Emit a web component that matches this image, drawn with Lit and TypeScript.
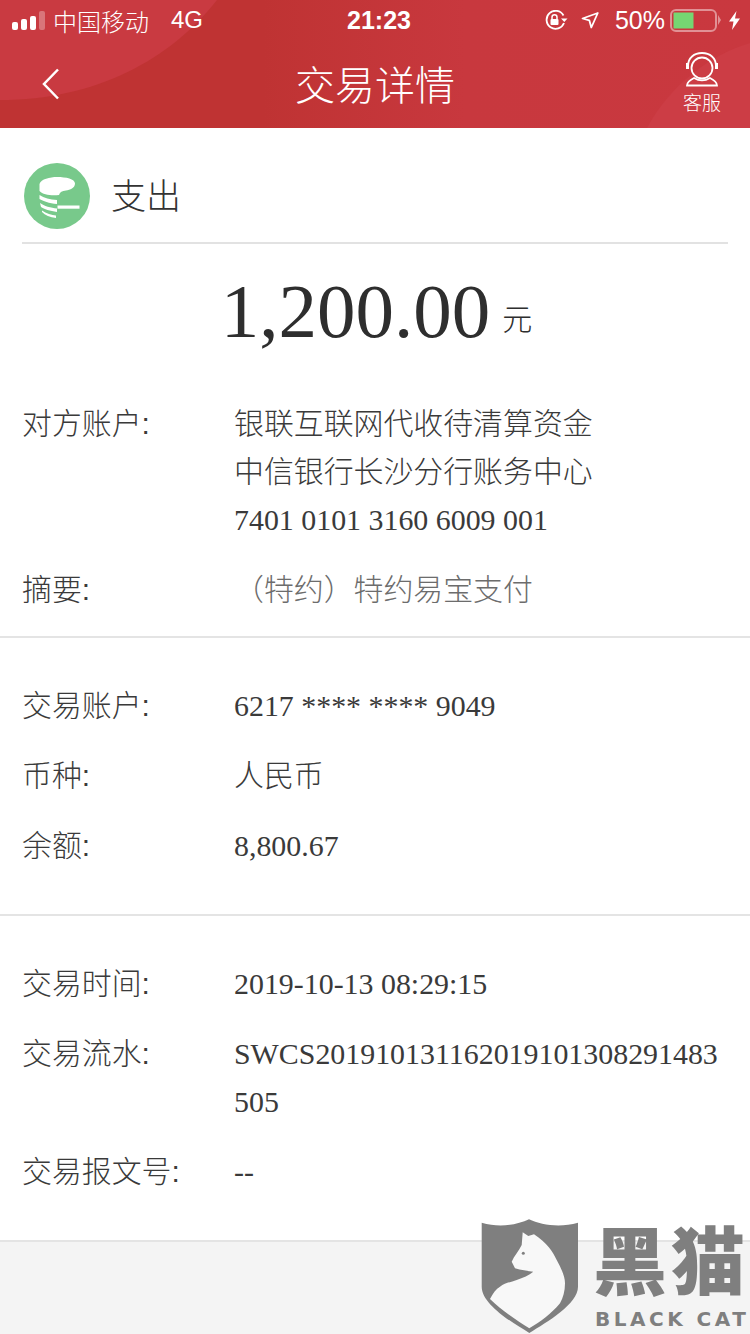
import { LitElement, html, css, svg, unsafeCSS } from 'lit';
import { customElement } from 'lit/decorators.js';

const CJK = unsafeCSS(`"Noto Sans CJK SC", "Liberation Sans", sans-serif`);

interface Row {
  label: string;
  lines: string[];
  muted?: boolean;
}

const first: Row[] = [
  { label: '对方账户:', lines: ['银联互联网代收待清算资金', '中信银行长沙分行账务中心', '7401 0101 3160 6009 001'] },
  { label: '摘要:', lines: ['（特约）特约易宝支付'], muted: true },
];
const second: Row[] = [
  { label: '交易账户:', lines: ['6217 **** **** 9049'] },
  { label: '币种:', lines: ['人民币'] },
  { label: '余额:', lines: ['8,800.67'] },
];
const third: Row[] = [
  { label: '交易时间:', lines: ['2019-10-13 08:29:15'] },
  { label: '交易流水:', lines: ['SWCS201910131162019101308291483', '505'] },
  { label: '交易报文号:', lines: ['--'] },
];

const headerBg = svg`
  <svg class="bg" viewBox="0 0 750 128" preserveAspectRatio="none">
    <defs>
      <linearGradient id="shade" x1="0" y1="0" x2="1" y2="0">
        <stop offset="0" stop-color="#bf3333"></stop>
        <stop offset="0.35" stop-color="#bf3333"></stop>
        <stop offset="0.62" stop-color="#c8383e"></stop>
        <stop offset="1" stop-color="#c9383f"></stop>
      </linearGradient>
    </defs>
    <rect width="750" height="128" fill="url(#shade)"></rect>
    <path d="M217 0C170 60 95 100 0 100V0Z" fill="#c93a41"></path>
    <path d="M647 128C670 85 710 55 750 43V128Z" fill="#cc3d45"></path>
  </svg>
`;

@customElement('app-root')
export class AppRoot extends LitElement {
  static styles = css`
    :host {
      display: block;
      position: relative;
      width: 750px;
      height: 1334px;
      overflow: hidden;
      background: #f4f4f4;
      font-family: "Liberation Serif", "Noto Sans CJK SC", serif;
      color: #333;
    }
    .header {
      position: relative;
      height: 128px;
      color: #fff;
      overflow: hidden;
    }
    .bg {
      position: absolute;
      inset: 0;
      width: 100%;
      height: 100%;
    }
    .status,
    .nav {
      position: relative;
      display: flex;
      align-items: center;
    }
    .status {
      height: 40px;
      padding: 0 10px 0 12px;
      font-family: ${CJK};
      font-size: 24px;
      font-weight: 300;
    }
    .side {
      display: flex;
      align-items: center;
      flex: 1;
    }
    .side.right {
      justify-content: flex-end;
    }
    .signal {
      display: flex;
      align-items: flex-end;
      gap: 3px;
      margin-right: 8px;
    }
    .signal i {
      display: block;
      width: 6px;
      border-radius: 2px;
      background: #fff;
    }
    .net {
      margin-left: 22px;
      font-family: "Liberation Sans", sans-serif;
      font-size: 24px;
    }
    .time {
      font-family: "Liberation Sans", sans-serif;
      font-weight: 700;
      font-size: 25px;
      padding-left: 6px;
    }
    .pct {
      font-family: "Liberation Sans", sans-serif;
      font-size: 25px;
      margin: 0 5px 0 16px;
    }
    .lock {
      margin-right: 13px;
    }
    .tip {
      margin: 0 7px 0 0;
    }
    .nav {
      height: 86px;
      justify-content: center;
    }
    .title {
      font-family: ${CJK};
      font-size: 40px;
      font-weight: 300;
    }
    .back {
      position: absolute;
      left: 42px;
      top: 28px;
    }
    .service {
      position: absolute;
      right: 29px;
      top: 51px;
      display: flex;
      flex-direction: column;
      align-items: center;
      font-family: ${CJK};
      font-size: 19px;
      font-weight: 300;
      line-height: 24px;
      gap: 3px;
    }
    .content {
      background: #fff;
      border-bottom: 2px solid #e4e4e4;
      height: 1114px;
      box-sizing: border-box;
    }
    .type {
      display: flex;
      align-items: center;
      gap: 21px;
      margin: 0 22px;
      height: 116px;
      border-bottom: 2px solid #e2e2e2;
      padding: 21px 0 0 2px;
      box-sizing: border-box;
      font-family: ${CJK};
      font-size: 35px;
      font-weight: 300;
    }
    .type span {
      margin-bottom: 4px;
    }
    .amount {
      display: flex;
      justify-content: center;
      align-items: baseline;
      gap: 12px;
      height: 156px;
      padding-left: 3px;
      box-sizing: border-box;
      line-height: 134px;
      font-size: 77px;
      color: #2e2e2e;
    }
    .amount span {
      font-family: ${CJK};
      font-size: 30px;
      font-weight: 300;
      position: relative;
      top: -7px;
    }
    .section {
      display: flex;
      flex-direction: column;
      gap: 22px;
      padding: 0 22px;
      box-sizing: border-box;
    }
    .s1 {
      height: 238px;
      border-bottom: 2px solid #e4e4e4;
    }
    .s2 {
      height: 278px;
      padding-top: 44px;
      border-bottom: 2px solid #e4e4e4;
    }
    .s3 {
      padding-top: 44px;
    }
    .row {
      display: flex;
      font-size: 29.9px;
      line-height: 48px;
    }
    .label {
      width: 212px;
      flex: none;
      font-family: "Liberation Sans", "Noto Sans CJK SC", sans-serif;
      font-weight: 300;
    }
    .label,
    .value {
      color: #3a3a3a;
    }
    .value div {
      white-space: nowrap;
      font-weight: 300;
    }
    .value.muted {
      color: #6c6c6c;
    }
    .mark {
      position: absolute;
      left: 481px;
      top: 1219px;
      width: 269px;
      height: 115px;
      color: #7f7f7f;
    }
    .shield {
      position: absolute;
      left: 0;
      top: 0;
    }
    .mark-cn {
      position: absolute;
      left: 112px;
      top: 6px;
      font-family: "Liberation Sans", "Noto Sans CJK SC", sans-serif;
      font-weight: 900;
      font-size: 74px;
      line-height: 78px;
      letter-spacing: 4px;
      white-space: nowrap;
    }
    .mark-en {
      position: absolute;
      left: 114px;
      top: 87px;
      font-family: "DejaVu Sans", "Liberation Sans", sans-serif;
      font-weight: 700;
      font-size: 20px;
      line-height: 26px;
      letter-spacing: 3.500px;
      white-space: nowrap;
    }
  `;

  private renderRows(rows: Row[]) {
    return rows.map(
      (r) => html`
        <div class="row">
          <div class="label">${r.label}</div>
          <div class="value ${r.muted ? 'muted' : ''}">
            ${r.lines.map((l) => html`<div>${l}</div>`)}
          </div>
        </div>
      `
    );
  }

  render() {
    return html`
      <div class="header">
        ${headerBg}
        <div class="status">
          <div class="side">
            <div class="signal">
              <i style="height:8px"></i><i style="height:11px"></i><i style="height:14px"></i>
              <i style="height:19px;opacity:.3"></i>
            </div>
            <span>中国移动</span><span class="net">4G</span>
          </div>
          <div class="time">21:23</div>
          <div class="side right">
            <svg class="lock" width="23" height="20" viewBox="0 0 23 20" fill="none" stroke="#fff" stroke-width="1.800">
              <path d="M18.500 5.500A9 9 0 1 0 19 13"></path>
              <path d="M16 8.500h6.500l-3.200 3.500z" fill="#fff" stroke="none"></path>
              <rect x="5.500" y="9" width="8" height="6" rx="1" fill="#fff" stroke="none"></rect>
              <path d="M7 9.500V7.200a2.500 2.500 0 0 1 5 0V9.500" stroke-width="1.500"></path>
            </svg>
            <svg width="18" height="17" viewBox="0 0 18 17" fill="none" stroke="#fff" stroke-width="1.800">
              <path d="M16.800 1 1.500 6.500l6.800 1.800 2 7.200z" stroke-linejoin="round"></path>
            </svg>
            <span class="pct">50%</span>
            <svg width="48" height="23" viewBox="0 0 48 23">
              <rect x="1" y="1" width="45" height="21" rx="5" fill="none" stroke="#fff" stroke-opacity=".45" stroke-width="2"></rect>
              <rect x="3.500" y="3.500" width="20" height="16" fill="#76d672"></rect>
            </svg>
            <svg class="tip" width="4" height="10" viewBox="0 0 4 10"><path d="M0 0l3 5-3 5z" fill="#fff" fill-opacity=".45"></path></svg>
            <svg width="11" height="19" viewBox="0 0 11 19"><path d="M7.500 0 0 10.500h4.500L3 19l8-11.500H6z" fill="#fff"></path></svg>
          </div>
        </div>
        <div class="nav">
          <svg class="back" width="18" height="32" viewBox="0 0 18 32" fill="none" stroke="#fff" stroke-width="2.500">
            <path d="M16 1.500 2 16l14 14.500"></path>
          </svg>
          <div class="title">交易详情</div>
        </div>
        <div class="service">
          <svg width="34" height="36" viewBox="0 0 34 36" fill="none" stroke="#fff" stroke-width="1.800">
            <path d="M3 15C3 7 9 2 17 2s14 5 14 13"></path>
            <circle cx="17" cy="17" r="10.500"></circle>
            <path d="M2.500 12v6M31.500 12v6" stroke-width="3"></path>
            <path d="M9 27C5 29 2 31 2 34.500H32C32 31 29 29 25 27C20 30 14 30 9 27z"></path>
          </svg>
          <span>客服</span>
        </div>
      </div>
      <div class="content">
        <div class="type">
          <svg width="66" height="66" viewBox="0 0 66 66">
            <circle cx="33" cy="33" r="33" fill="#78c98b"></circle>
            <path d="M15.500 21C17 16 26 14 33 14C42 14 51 16 51 20.500C51 25 46 27 42 27.500C38 28 36 29 35 32C28 33 19 32 15.500 28z" fill="#fff"></path>
            <path d="M15.500 32C20 35 26 36.500 33 37V41C25 40.500 19 38 15.500 36zM16 40C20 43 27 45 33 45.500V49C26 48 20 46 17 44zM18 47.500C22 50.500 28 52 32 52.500V55C26 54.500 21 52 18 49z" fill="#fff"></path>
            <rect x="33.500" y="42.500" width="22" height="3.200" fill="#fff"></rect>
          </svg>
          <span>支出</span>
        </div>
        <div class="amount">1,200.00<span>元</span></div>
        <div class="section s1">${this.renderRows(first)}</div>
        <div class="section s2">${this.renderRows(second)}</div>
        <div class="section s3">${this.renderRows(third)}</div>
      </div>
      <div class="mark">
        <svg class="shield" width="98" height="115" viewBox="0 0 98 115">
          <path d="M.7 3.700C18 9 36 6 48 .3c12 5.700 31 8.700 49 3.400V67.700C97 85 66 103 48.300 114 30 103 .7 85 .7 67.700z" fill="#7f7f7f"></path>
          <path d="M41.700 13.300 47.300 17 53 15.300C66 24 72 33 75.700 41 80 49 84 57 84 64.300 84 72 82 79 79 84.300 70 95 59 103 48.300 109.300 35 101 20 91 9 80 12 74 15 70 19 67.700 24 64 30 63 35.700 61 42 59 48 56 52.300 52.700 46 52 40 51 34 49.300L30.700 42.700C33 37 38 32 40.700 26z" fill="#f8f8f8"></path>
          <circle cx="42.300" cy="34.300" r="1.500" fill="#7f7f7f"></circle>
        </svg>
        <div class="mark-cn">黑猫</div>
        <div class="mark-en">BLACK CAT</div>
      </div>
    `;
  }
}
